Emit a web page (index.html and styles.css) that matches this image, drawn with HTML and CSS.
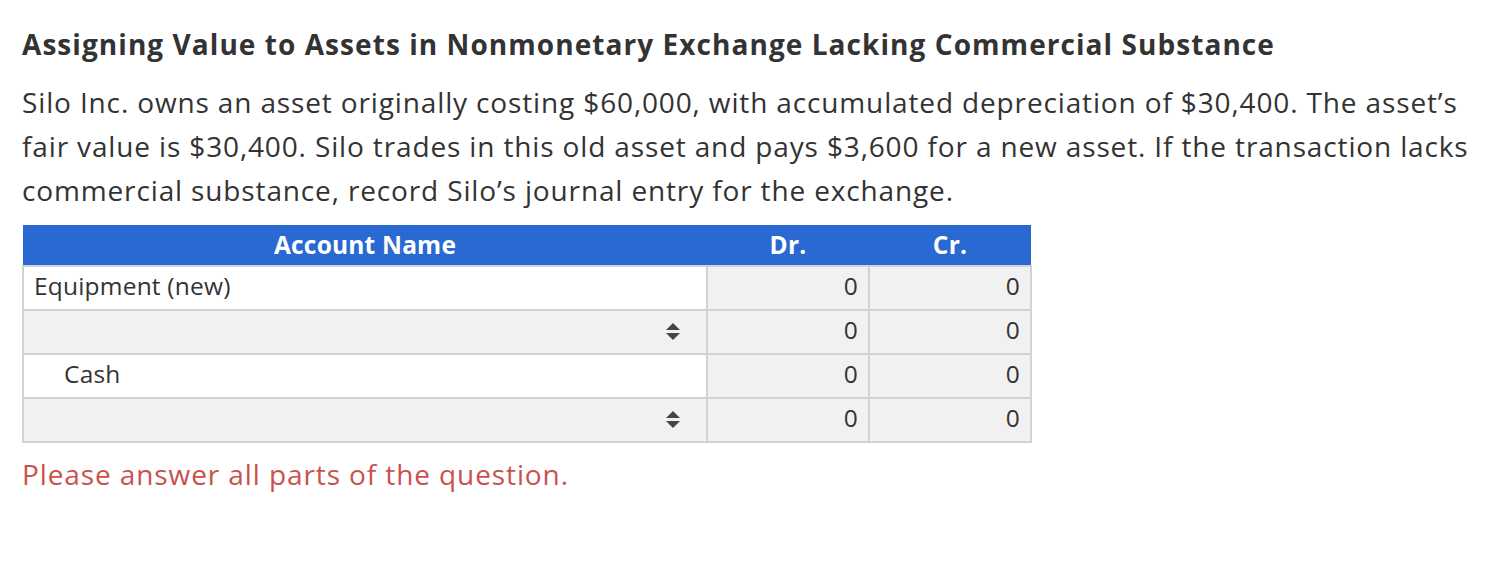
FILE: index.html
```html
<!DOCTYPE html>
<html>
<head>
<meta charset="utf-8">
<link rel="stylesheet" href="styles.css">
</head>
<body>
<div class="page">
  <h1 class="title">Assigning Value to Assets in Nonmonetary Exchange Lacking Commercial Substance</h1>
  <p class="question">Silo Inc. owns an asset originally costing $60,000, with accumulated depreciation of $30,400. The asset’s fair value is $30,400. Silo trades in this old asset and pays $3,600 for a new asset. If the transaction lacks commercial substance, record Silo’s journal entry for the exchange.</p>
  <table class="journal">
    <thead>
      <tr>
        <th class="col-acct">Account Name</th>
        <th class="col-num">Dr.</th>
        <th class="col-num">Cr.</th>
      </tr>
    </thead>
    <tbody>
      <tr>
        <td class="acct">Equipment (new)</td>
        <td class="num">0</td>
        <td class="num">0</td>
      </tr>
      <tr>
        <td class="acct select"><span class="arrows"><span class="up"></span><span class="down"></span></span></td>
        <td class="num">0</td>
        <td class="num">0</td>
      </tr>
      <tr>
        <td class="acct indent">Cash</td>
        <td class="num">0</td>
        <td class="num">0</td>
      </tr>
      <tr>
        <td class="acct select"><span class="arrows"><span class="up"></span><span class="down"></span></span></td>
        <td class="num">0</td>
        <td class="num">0</td>
      </tr>
    </tbody>
  </table>
  <p class="warning">Please answer all parts of the question.</p>
</div>
</body>
</html>
```

FILE: styles.css
```css
html, body {
  margin: 0;
  padding: 0;
  background: #ffffff;
}

body {
  font-family: "Open Sans", "Liberation Sans", sans-serif;
  color: #333333;
}

.page {
  padding: 24px 18px 0 22px;
}

.title {
  margin: 0;
  font-size: 28px;
  font-weight: 700;
  letter-spacing: 1.06px;
  line-height: 40px;
  color: #333333;
}

.question {
  margin: 16px 0 13px 0;
  font-size: 28px;
  letter-spacing: 0.86px;
  line-height: 44px;
  color: #333333;
}

.journal {
  border-collapse: collapse;
  width: 1010px;
  font-size: 24.5px;
  letter-spacing: 0.2px;
}

.journal th {
  background: #2a69d1;
  color: #ffffff;
  font-weight: 700;
  height: 40px;
  padding: 0;
  text-align: center;
  line-height: 38px;
}

.col-acct {
  width: 684px;
}

.col-num {
  width: 162px;
}

.journal td {
  border: 2px solid #d2d2d2;
  height: 36px;
  padding: 0 10px 6px 10px;
  color: #333333;
}

.acct {
  background: #ffffff;
  text-align: left;
}

.acct.select {
  background: #f1f1f1;
  text-align: right;
  padding-right: 26px;
}

.acct.indent {
  padding-left: 40px;
}

.num {
  background: #f1f1f1;
  text-align: right;
}

.arrows {
  display: inline-flex;
  flex-direction: column;
  align-items: center;
  gap: 3px;
  vertical-align: middle;
}

.up {
  width: 0;
  height: 0;
  border-left: 7px solid transparent;
  border-right: 7px solid transparent;
  border-bottom: 7px solid #444444;
}

.down {
  width: 0;
  height: 0;
  border-left: 7px solid transparent;
  border-right: 7px solid transparent;
  border-top: 7px solid #444444;
}

.warning {
  margin: 11px 0 0 0;
  font-size: 28px;
  letter-spacing: 0.9px;
  line-height: 40px;
  color: #c9524e;
}
```
